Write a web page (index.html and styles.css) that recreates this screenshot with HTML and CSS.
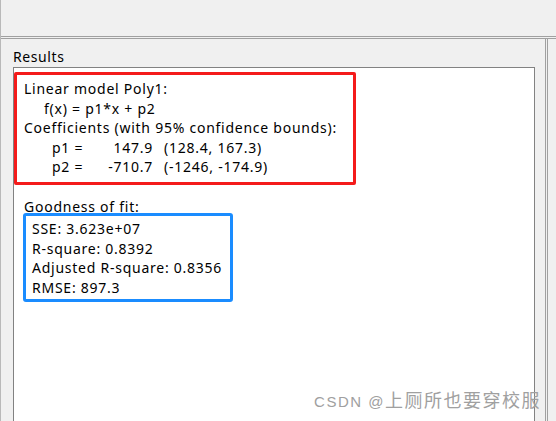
FILE: index.html
```html
<!DOCTYPE html>
<html lang="en">
<head>
  <meta charset="UTF-8" />
  <meta name="viewport" content="width=device-width, initial-scale=1.0"/>
  <title>Curve Fitting - Results</title>
  <link rel="stylesheet" href="styles.css">
</head>
<body>
  <div class="window">
    <div class="toolbar"></div>
    <div class="main">
      <div class="results">
        <div class="label">Results</div>
        <div class="panel">
          <div class="output">
            <div class="line">Linear model Poly1:</div>
            <div class="line formula">f(x) = p1*x + p2</div>
            <div class="line">Coefficients (with 95% confidence bounds):</div>
            <div class="line coef">
              <span class="name">p1 =</span><span class="value">147.9</span><span class="bounds">(128.4, 167.3)</span>
            </div>
            <div class="line coef">
              <span class="name">p2 =</span><span class="value">-710.7</span><span class="bounds">(-1246, -174.9)</span>
            </div>
            <div class="line blank"></div>
            <div class="line">Goodness of fit:</div>
            <div class="stats">
              <div class="line">SSE: 3.623e+07</div>
              <div class="line">R-square: 0.8392</div>
              <div class="line">Adjusted R-square: 0.8356</div>
              <div class="line">RMSE: 897.3</div>
            </div>
          </div>
          <!-- highlight frames drawn on top of the output -->
          <div class="frame frame-red"></div>
          <div class="frame frame-blue"></div>
        </div>
      </div>
      <div class="splitter"></div>
    </div>
    <div class="watermark">CSDN @<span class="cjk">上厕所也要穿校服</span></div>
  </div>
</body>
</html>
```

FILE: styles.css
```css
* {
  box-sizing: border-box;
}

body {
  margin: 0;
  background-color: #f0f0f0;
  font-family: "Noto Sans", "Liberation Sans", sans-serif;
  font-size: 14px;
  color: #000;
  overflow: hidden;
}

.window {
  position: relative;
  width: 556px;
  height: 421px;
  border-left: 1px solid #b9b9b9;
  overflow: hidden;
}

.toolbar {
  height: 37px;
  border-bottom: 1px solid #a0a0a0;
}

.main {
  display: flex;
  margin-top: 1px;
  border-top: 1px solid #a0a0a0;
  height: 383px;
}

.results {
  width: 544px;
  padding: 8px 0 0 12px;
}

.label {
  line-height: 20px;
  letter-spacing: 0.6px;
}

.panel {
  position: relative;
  width: 522px;
  height: 380px;
  background-color: #fff;
  border: 1px solid #828282;
}

.output {
  padding: 11px 0 0 10px;
  letter-spacing: 0.75px;
}

.line {
  height: 19.6px;
  line-height: 19.6px;
  white-space: nowrap;
}

.formula {
  padding-left: 20px;
}

.coef {
  padding-left: 28px;
}

.coef .name {
  display: inline-block;
  width: 56px;
}

.coef .value {
  display: inline-block;
  width: 45px;
  text-align: right;
}

.coef .bounds {
  margin-left: 11px;
}

.stats {
  margin-top: 3px;
  padding-left: 8px;
}

.frame {
  position: absolute;
  border-style: solid;
  border-width: 3px;
}

.frame-red {
  left: 0;
  top: 4px;
  width: 342px;
  height: 113px;
  border-color: #f41b1b;
  border-radius: 2px;
}

.frame-blue {
  left: 9px;
  top: 145px;
  width: 210px;
  height: 89px;
  border-color: #1a8cff;
  border-radius: 3px;
}

.splitter {
  width: 3px;
  border-left: 1px solid #a0a0a0;
  border-right: 1px solid #a0a0a0;
}

.watermark {
  position: absolute;
  right: 15px;
  top: 386px;
  font-family: "Liberation Sans", "Noto Sans CJK SC", sans-serif;
  font-size: 15px;
  letter-spacing: 1.5px;
  color: #a0a0a0;
  white-space: nowrap;
}

.watermark .cjk {
  font-family: "Noto Sans CJK SC", sans-serif;
  font-size: 18px;
  letter-spacing: 1.5px;
}
```
